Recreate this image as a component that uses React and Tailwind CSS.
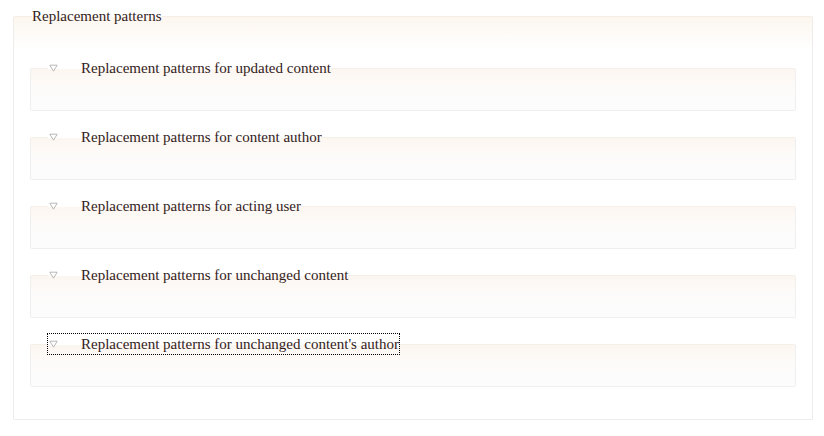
import React from "react";

const items = [
  "Replacement patterns for updated content",
  "Replacement patterns for content author",
  "Replacement patterns for acting user",
  "Replacement patterns for unchanged content",
  "Replacement patterns for unchanged content's author",
];

function Tri() {
  return (
    <svg width="9" height="8" viewBox="0 0 9 8" className="block">
      <path d="M0.8 1.2 H8.2 L4.5 7.2 Z" fill="none" stroke="#b8b8b8" strokeWidth="1" />
    </svg>
  );
}

export default function App() {
  return (
    <div className="w-[824px] h-[436px] bg-white text-[15px] text-[#331c1c] font-['Liberation_Serif','Times_New_Roman',serif]">
      <div className="pt-[8px] pl-[13px]">
        <fieldset className="w-[800px] border border-[#efece9] border-t-[#f5eee6] rounded-[2px] px-[16px] pb-[32px] bg-[linear-gradient(to_bottom,#fcf6ef_0px,#ffffff_32px)]">
          <legend className="ml-[2px] leading-[17px]">Replacement patterns</legend>
          <div className="flex flex-col gap-[16px] pt-[33px]">
            {items.map((t, i) => (
              <fieldset
                key={i}
                className="border border-[#efefef] border-t-[#f6efe7] rounded-[2px] pb-[32px] bg-[linear-gradient(to_bottom,#fcf6f0_0px,#fdfbf9_18px,#fcfcfc_30px)]"
              >
                <legend className="ml-[17px] leading-[20px]">
                  <a
                    className={
                      "flex items-center cursor-pointer " +
                      (i === items.length - 1 ? "outline-1 outline-dotted outline-black" : "")
                    }
                  >
                    <span className="w-[33px] pl-[1px] flex items-center">
                      <Tri />
                    </span>
                    <span>{t}</span>
                  </a>
                </legend>
              </fieldset>
            ))}
          </div>
        </fieldset>
      </div>
    </div>
  );
}
